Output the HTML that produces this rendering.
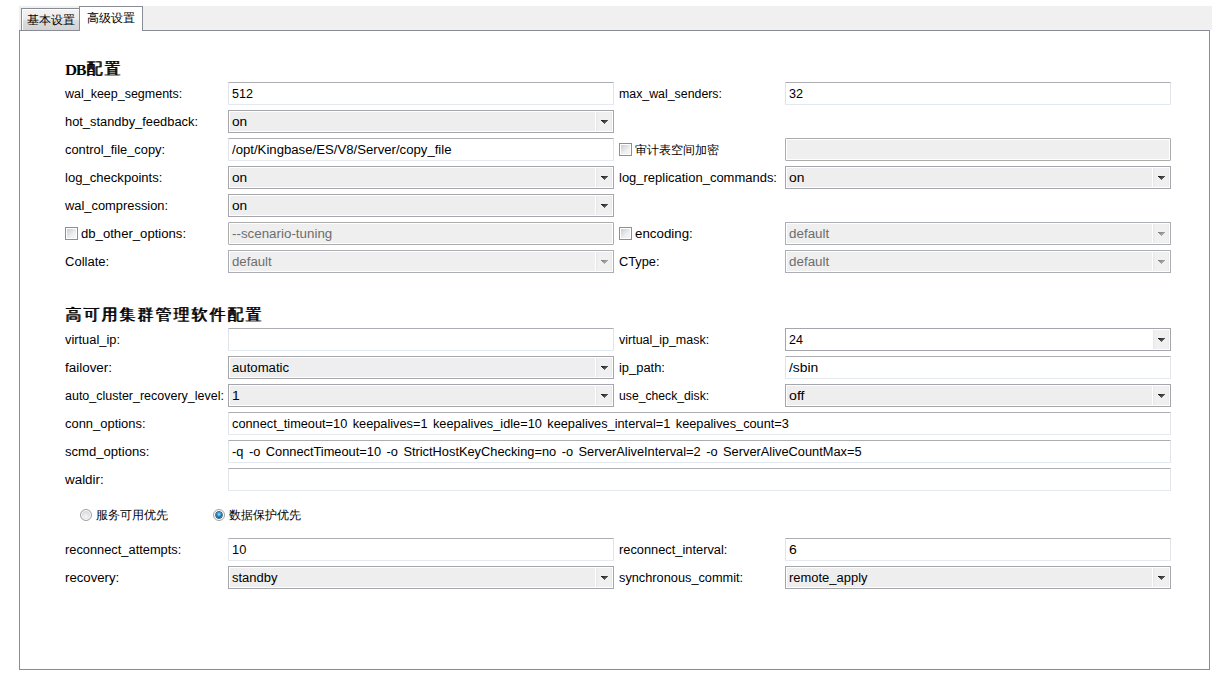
<!DOCTYPE html>
<html><head><meta charset="utf-8">
<style>
html,body{margin:0;padding:0;background:#fff;width:1224px;height:687px;overflow:hidden;position:relative}
div{position:absolute;box-sizing:border-box}
.lbl,.val{word-spacing:1.8px;font-family:"Liberation Sans",sans-serif;font-size:12px;line-height:14px;white-space:pre;color:#000;transform-origin:0 0}
.dtx{color:#6d6d6d}
.hd{font-family:"Liberation Serif",serif;font-weight:bold;font-size:16px;line-height:20px;letter-spacing:2px;white-space:pre;color:#000}
.hc{font-weight:normal;text-shadow:1px 0 0 #000}
.strip{left:19px;top:6px;width:1193px;height:24px;background:#f0f0f0}
.tab{border:1px solid #898c95;border-bottom:none;font-family:"Liberation Sans",sans-serif;font-size:12px;line-height:14px;color:#000;white-space:pre}
.tab1{left:21px;top:8px;width:59px;height:22px;background:linear-gradient(#f3f3f3 0,#ebebeb 50%,#dddddd 51%,#d3d3d3 100%);box-shadow:inset 1px 1px 0 #fff}
.tab2{left:79px;top:6px;width:64px;height:25px;background:#fff;z-index:2}
.panel{left:19px;top:30px;width:1191px;height:640px;border:1px solid #898c95;background:#fff}
.tb{height:23px;border:1px solid;border-color:#abadb3 #e2e3ea #e3e9ef #e2e3ea;border-radius:1px;background:#fff}
.tb.dis{background:#efefef;border-color:#acacac;box-shadow:inset 0 0 0 1px #fff}
.cb{height:23px;border:1px solid #a4a6ab;background:#eeeeee;box-shadow:inset 0 0 0 1px #fff}
.cb.ed{background:#fff}
.cb.dis{background:#efefef;border-color:#abaeb5}
.cb .btn{position:absolute;right:1px;top:1px;width:16px;height:19px;background:linear-gradient(90deg,#e6e6e6,#f0f0f0 2px,#f0f0f0 14px,#e9e9e9);border-left:1px solid #fff}
.cb .arr{position:absolute;right:5px;top:9px;fill:url(#ag)}
.cb.dis .arr{fill:url(#agd)}
.chk{width:13px;height:13px;border:1px solid #8f8f8f;background:linear-gradient(135deg,#c3c7cd,#eef0f2 60%,#f8f8f8);box-shadow:inset 0 0 0 1px #fff}
.rad{width:12px;height:12px;border-radius:50%;border:1px solid #a0a0a0;background:radial-gradient(circle at 50% 65%,#f6f6f6,#d3d6da 70%);box-shadow:inset 0 0 0 1px #fff}
.rad.on{background:#fff}
.rad.on i{position:absolute;left:2px;top:2px;width:6px;height:6px;border-radius:50%;background:radial-gradient(circle at 50% 40%,#a8e8fc 0,#2fa3e2 35%,#0e5a94 65%,#13304d 100%);box-shadow:0 0 0 0.7px #1a3550}

</style></head><body>
<svg width="0" height="0" style="position:absolute"><defs><linearGradient id="ag" x1="0" y1="0" x2="1" y2="1"><stop offset="0" stop-color="#111"/><stop offset="1" stop-color="#8a8a8a"/></linearGradient><linearGradient id="agd" x1="0" y1="0" x2="1" y2="1"><stop offset="0" stop-color="#7a7a7a"/><stop offset="1" stop-color="#c4c4c4"/></linearGradient></defs></svg>
<div class="strip"></div>
<div class="panel"></div>
<div class="tab tab1"><span style="position:absolute;left:5px;top:4px">基本设置</span></div>
<div class="tab tab2"><span style="position:absolute;left:7px;top:4px">高级设置</span></div>
<div class="hd hc" style="left:65px;top:60px;letter-spacing:0;font-size:15px">DB</div>
<div class="hd hc" style="left:86px;top:59px">配置</div>
<div id="t0" class="lbl" style="left:65px;top:87px;transform:scaleX(1.0402)">wal_keep_segments:</div>
<div class="tb" style="left:228px;top:82px;width:386px"></div>
<div id="t1" class="val" style="left:232px;top:87px;transform:scaleX(1.0450)">512</div>
<div id="t2" class="lbl" style="left:619px;top:87px;transform:scaleX(1.0293)">max_wal_senders:</div>
<div class="tb" style="left:785px;top:82px;width:386px"></div>
<div id="t3" class="val" style="left:789px;top:87px;transform:scaleX(1.0538)">32</div>
<div id="t4" class="lbl" style="left:65px;top:115px;transform:scaleX(1.0715)">hot_standby_feedback:</div>
<div class="cb" style="left:228px;top:110px;width:386px"><i class="btn"></i><svg class="arr" width="7" height="4"><path d="M0 0h7v1h-1v1h-1v1h-1v1h-1v-1h-1v-1h-1v-1h-1z"/></svg></div>
<div id="t5" class="val" style="left:232px;top:115px;transform:scaleX(1.1385)">on</div>
<div id="t6" class="lbl" style="left:65px;top:143px;transform:scaleX(1.0717)">control_file_copy:</div>
<div class="tb" style="left:228px;top:138px;width:386px"></div>
<div id="t7" class="val" style="left:232px;top:143px;transform:scaleX(1.0970)">/opt/Kingbase/ES/V8/Server/copy_file</div>
<div class="chk" style="left:619px;top:143px"></div>
<div id="t8" class="lbl cjk" style="left:635px;top:143px">审计表空间加密</div>
<div class="tb dis" style="left:785px;top:138px;width:386px"></div>
<div id="t9" class="lbl" style="left:65px;top:171px;transform:scaleX(1.0898)">log_checkpoints:</div>
<div class="cb" style="left:228px;top:166px;width:386px"><i class="btn"></i><svg class="arr" width="7" height="4"><path d="M0 0h7v1h-1v1h-1v1h-1v1h-1v-1h-1v-1h-1v-1h-1z"/></svg></div>
<div id="t10" class="val" style="left:232px;top:171px;transform:scaleX(1.1385)">on</div>
<div id="t11" class="lbl" style="left:619px;top:171px;transform:scaleX(1.0814)">log_replication_commands:</div>
<div class="cb" style="left:785px;top:166px;width:386px"><i class="btn"></i><svg class="arr" width="7" height="4"><path d="M0 0h7v1h-1v1h-1v1h-1v1h-1v-1h-1v-1h-1v-1h-1z"/></svg></div>
<div id="t12" class="val" style="left:789px;top:171px;transform:scaleX(1.1538)">on</div>
<div id="t13" class="lbl" style="left:65px;top:199px;transform:scaleX(1.0737)">wal_compression:</div>
<div class="cb" style="left:228px;top:194px;width:386px"><i class="btn"></i><svg class="arr" width="7" height="4"><path d="M0 0h7v1h-1v1h-1v1h-1v1h-1v-1h-1v-1h-1v-1h-1z"/></svg></div>
<div id="t14" class="val" style="left:232px;top:199px;transform:scaleX(1.1385)">on</div>
<div class="chk" style="left:65px;top:227px"></div>
<div id="t15" class="lbl" style="left:81px;top:227px;transform:scaleX(1.0937)">db_other_options:</div>
<div class="tb dis" style="left:228px;top:222px;width:386px"></div>
<div id="t16" class="val dtx" style="left:232px;top:227px;transform:scaleX(1.1135)">--scenario-tuning</div>
<div class="chk" style="left:619px;top:227px"></div>
<div id="t17" class="lbl" style="left:635px;top:227px;transform:scaleX(1.1098)">encoding:</div>
<div class="cb dis" style="left:785px;top:222px;width:386px"><i class="btn"></i><svg class="arr" width="7" height="4"><path d="M0 0h7v1h-1v1h-1v1h-1v1h-1v-1h-1v-1h-1v-1h-1z"/></svg></div>
<div id="t18" class="val dtx" style="left:789px;top:227px;transform:scaleX(1.1167)">default</div>
<div id="t19" class="lbl" style="left:65px;top:255px;transform:scaleX(1.0850)">Collate:</div>
<div class="cb dis" style="left:228px;top:250px;width:386px"><i class="btn"></i><svg class="arr" width="7" height="4"><path d="M0 0h7v1h-1v1h-1v1h-1v1h-1v-1h-1v-1h-1v-1h-1z"/></svg></div>
<div id="t20" class="val dtx" style="left:232px;top:255px;transform:scaleX(1.1028)">default</div>
<div id="t21" class="lbl" style="left:619px;top:255px;transform:scaleX(1.0649)">CType:</div>
<div class="cb dis" style="left:785px;top:250px;width:386px"><i class="btn"></i><svg class="arr" width="7" height="4"><path d="M0 0h7v1h-1v1h-1v1h-1v1h-1v-1h-1v-1h-1v-1h-1z"/></svg></div>
<div id="t22" class="val dtx" style="left:789px;top:255px;transform:scaleX(1.1167)">default</div>
<div class="hd hc" style="left:65px;top:305px">高可用集群管理软件配置</div>
<div id="t23" class="lbl" style="left:65px;top:333px;transform:scaleX(1.0700)">virtual_ip:</div>
<div class="tb" style="left:228px;top:328px;width:386px"></div>
<div id="t24" class="lbl" style="left:619px;top:333px;transform:scaleX(1.0395)">virtual_ip_mask:</div>
<div class="cb ed" style="left:785px;top:328px;width:386px"><i class="btn"></i><svg class="arr" width="7" height="4"><path d="M0 0h7v1h-1v1h-1v1h-1v1h-1v-1h-1v-1h-1v-1h-1z"/></svg></div>
<div id="t25" class="val" style="left:789px;top:333px;transform:scaleX(1.0385)">24</div>
<div id="t26" class="lbl" style="left:65px;top:361px;transform:scaleX(1.1195)">failover:</div>
<div class="cb" style="left:228px;top:356px;width:386px"><i class="btn"></i><svg class="arr" width="7" height="4"><path d="M0 0h7v1h-1v1h-1v1h-1v1h-1v-1h-1v-1h-1v-1h-1z"/></svg></div>
<div id="t27" class="val" style="left:232px;top:361px;transform:scaleX(1.0981)">automatic</div>
<div id="t28" class="lbl" style="left:619px;top:361px;transform:scaleX(1.0762)">ip_path:</div>
<div class="tb" style="left:785px;top:356px;width:386px"></div>
<div id="t29" class="val" style="left:789px;top:361px;transform:scaleX(1.1560)">/sbin</div>
<div id="t30" class="lbl" style="left:65px;top:389px;transform:scaleX(1.0401)">auto_cluster_recovery_level:</div>
<div class="cb" style="left:228px;top:384px;width:386px"><i class="btn"></i><svg class="arr" width="7" height="4"><path d="M0 0h7v1h-1v1h-1v1h-1v1h-1v-1h-1v-1h-1v-1h-1z"/></svg></div>
<div id="t31" class="val" style="left:232px;top:389px;transform:scaleX(1.1500)">1</div>
<div id="t32" class="lbl" style="left:619px;top:389px;transform:scaleX(1.0159)">use_check_disk:</div>
<div class="cb" style="left:785px;top:384px;width:386px"><i class="btn"></i><svg class="arr" width="7" height="4"><path d="M0 0h7v1h-1v1h-1v1h-1v1h-1v-1h-1v-1h-1v-1h-1z"/></svg></div>
<div id="t33" class="val" style="left:789px;top:389px;transform:scaleX(1.1800)">off</div>
<div id="t34" class="lbl" style="left:65px;top:417px;transform:scaleX(1.0784)">conn_options:</div>
<div class="tb" style="left:228px;top:412px;width:943px"></div>
<div id="t35" class="val" style="left:232px;top:417px;transform:scaleX(1.0630)">connect_timeout=10 keepalives=1 keepalives_idle=10 keepalives_interval=1 keepalives_count=3</div>
<div id="t36" class="lbl" style="left:65px;top:445px;transform:scaleX(1.0908)">scmd_options:</div>
<div class="tb" style="left:228px;top:440px;width:943px"></div>
<div id="t37" class="val" style="left:232px;top:445px;transform:scaleX(1.0679)">-q -o ConnectTimeout=10 -o StrictHostKeyChecking=no -o ServerAliveInterval=2 -o ServerAliveCountMax=5</div>
<div id="t38" class="lbl" style="left:65px;top:473px;transform:scaleX(1.1176)">waldir:</div>
<div class="tb" style="left:228px;top:468px;width:943px"></div>
<div class="rad" style="left:80px;top:509px"></div>
<div id="t39" class="lbl cjk" style="left:96px;top:508px">服务可用优先</div>
<div class="rad on" style="left:213px;top:509px"><i></i></div>
<div id="t40" class="lbl cjk" style="left:229px;top:508px">数据保护优先</div>
<div id="t41" class="lbl" style="left:65px;top:543px;transform:scaleX(1.0694)">reconnect_attempts:</div>
<div class="tb" style="left:228px;top:538px;width:386px"></div>
<div id="t42" class="val" style="left:232px;top:543px;transform:scaleX(1.0692)">10</div>
<div id="t43" class="lbl" style="left:619px;top:543px;transform:scaleX(1.0690)">reconnect_interval:</div>
<div class="tb" style="left:785px;top:538px;width:386px"></div>
<div id="t44" class="val" style="left:789px;top:543px;transform:scaleX(1.1667)">6</div>
<div id="t45" class="lbl" style="left:65px;top:571px;transform:scaleX(1.1000)">recovery:</div>
<div class="cb" style="left:228px;top:566px;width:386px"><i class="btn"></i><svg class="arr" width="7" height="4"><path d="M0 0h7v1h-1v1h-1v1h-1v1h-1v-1h-1v-1h-1v-1h-1z"/></svg></div>
<div id="t46" class="val" style="left:232px;top:571px;transform:scaleX(1.0833)">standby</div>
<div id="t47" class="lbl" style="left:619px;top:571px;transform:scaleX(1.0638)">synchronous_commit:</div>
<div class="cb" style="left:785px;top:566px;width:386px"><i class="btn"></i><svg class="arr" width="7" height="4"><path d="M0 0h7v1h-1v1h-1v1h-1v1h-1v-1h-1v-1h-1v-1h-1z"/></svg></div>
<div id="t48" class="val" style="left:789px;top:571px;transform:scaleX(1.0795)">remote_apply</div>
</body></html>
